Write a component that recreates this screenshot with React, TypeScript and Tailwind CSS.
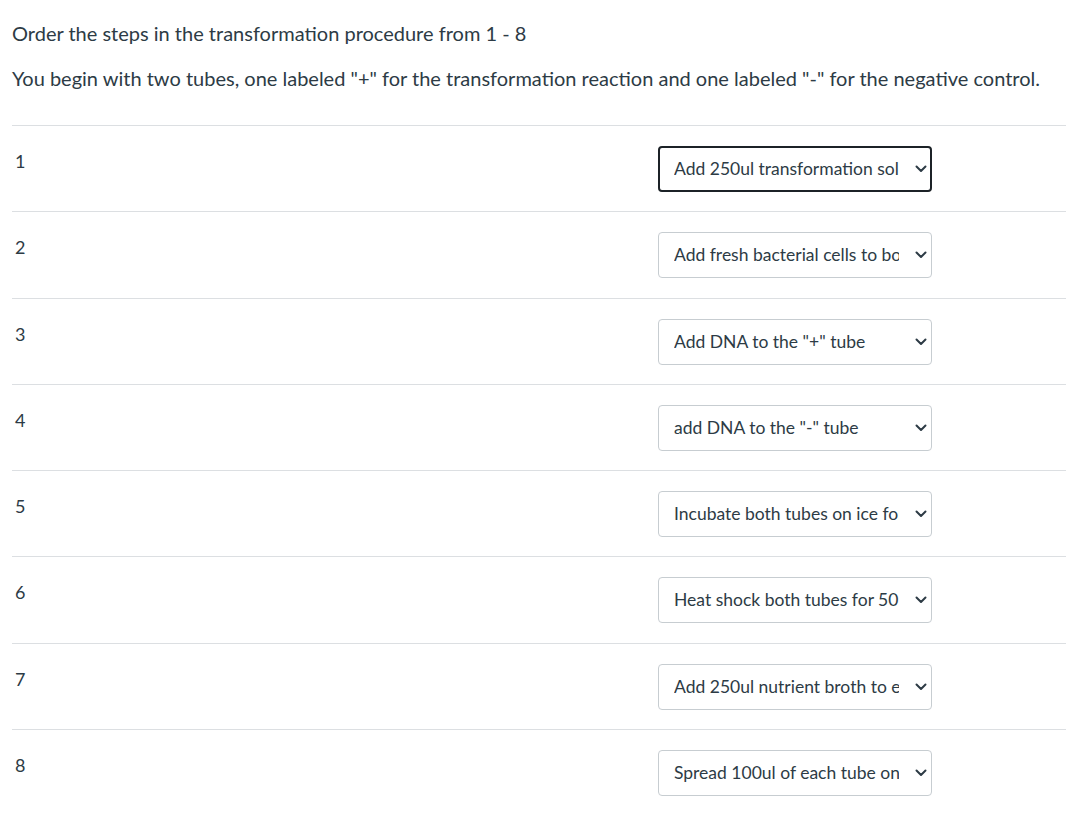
const steps = [
  "Add 250ul transformation solution to both tubes",
  "Add fresh bacterial cells to both tubes",
  'Add DNA to the "+" tube',
  'add DNA to the "-" tube',
  "Incubate both tubes on ice for 10 minutes",
  "Heat shock both tubes for 50 seconds",
  "Add 250ul nutrient broth to each tube",
  "Spread 100ul of each tube on plates",
];

function Chevron() {
  return (
    <svg width="12" height="8" viewBox="0 0 12 8" className="shrink-0">
      <path d="M1.5 1.5 L6 6 L10.5 1.5" fill="none" stroke="#2d3b45" strokeWidth="2" strokeLinecap="round" strokeLinejoin="round" />
    </svg>
  );
}

export default function App() {
  return (
    <div className="min-h-screen bg-white text-[#2d3b45] font-['Lato',sans-serif]">
      {/* Question text */}
      <div className="pl-3 pt-[21px]">
        <p className="text-[20px] leading-6">Order the steps in the transformation procedure from 1 - 8</p>
        <p className="text-[20px] leading-6 mt-[21px]">
          You begin with two tubes, one labeled "+" for the transformation reaction and one labeled "-" for the negative control.
        </p>
      </div>

      {/* Answer rows */}
      <div className="ml-3 mt-[35px]">
        {steps.map((s, i) => (
          <div key={i} className="flex justify-between border-t border-[#dcdfe2] h-[86.3px]">
            <div className="pl-[3px] pt-[23px] text-[18px] leading-6">{i + 1}</div>
            <div className="pt-[20px] w-[408px]">
              <div
                className={
                  "h-[46px] w-[274px] flex items-center rounded-[4px] bg-white " +
                  (i === 0 ? "border-2 border-[#1c2227] pl-[14px] pr-[3px]" : "border border-[#c7cdd1] pl-[15px] pr-[4px]")
                }
              >
                <div className="flex-1 overflow-hidden whitespace-nowrap text-[17.5px] leading-6 mr-[16px]">{s}</div>
                <Chevron />
              </div>
            </div>
          </div>
        ))}
      </div>
    </div>
  );
}
